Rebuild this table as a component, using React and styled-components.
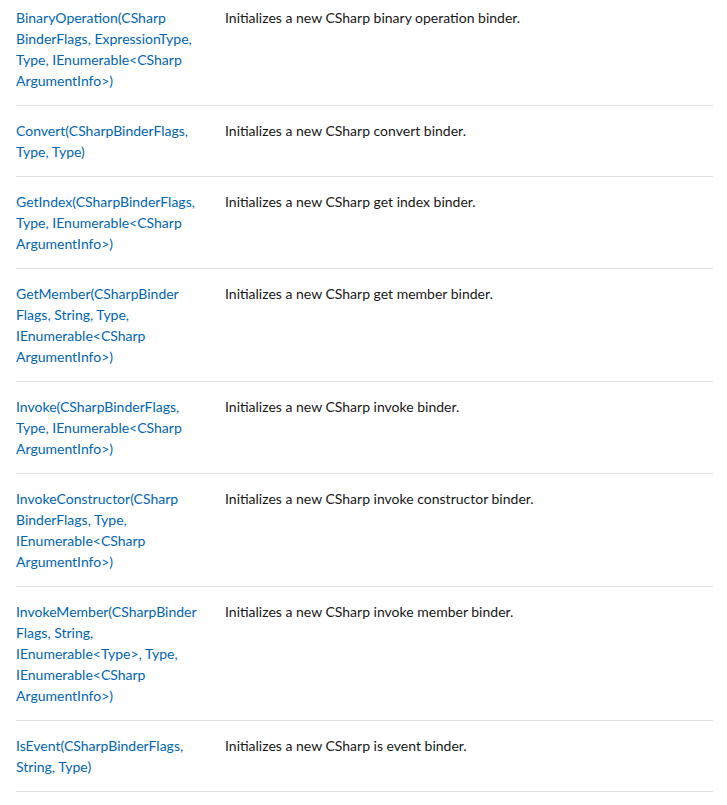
import React from 'react';
import styled, { createGlobalStyle } from 'styled-components';

const GlobalStyle = createGlobalStyle`
  body {
    margin: 0;
    background: #ffffff;
    font-family: 'Segoe UI', Lato, 'Liberation Sans', sans-serif;
    font-size: 14px;
    color: #171717;
  }
`;

const MembersTable = styled.div`
  margin: -7px 14px 0 16px;
`;

const Row = styled.div`
  display: grid;
  grid-template-columns: 209px 1fr;
  border-bottom: 1px solid #e1e1e1;
`;

const Cell = styled.div`
  padding: 14px 0;
  line-height: 21px;
`;

const MemberLink = styled.a`
  color: #0065b3;
  text-decoration: none;
  cursor: pointer;
`;

const members = [
  {
    lines: ['BinaryOperation(CSharp', 'BinderFlags, ExpressionType,', 'Type, IEnumerable<CSharp', 'ArgumentInfo>)'],
    summary: 'Initializes a new CSharp binary operation binder.',
  },
  {
    lines: ['Convert(CSharpBinderFlags,', 'Type, Type)'],
    summary: 'Initializes a new CSharp convert binder.',
  },
  {
    lines: ['GetIndex(CSharpBinderFlags,', 'Type, IEnumerable<CSharp', 'ArgumentInfo>)'],
    summary: 'Initializes a new CSharp get index binder.',
  },
  {
    lines: ['GetMember(CSharpBinder', 'Flags, String, Type,', 'IEnumerable<CSharp', 'ArgumentInfo>)'],
    summary: 'Initializes a new CSharp get member binder.',
  },
  {
    lines: ['Invoke(CSharpBinderFlags,', 'Type, IEnumerable<CSharp', 'ArgumentInfo>)'],
    summary: 'Initializes a new CSharp invoke binder.',
  },
  {
    lines: ['InvokeConstructor(CSharp', 'BinderFlags, Type,', 'IEnumerable<CSharp', 'ArgumentInfo>)'],
    summary: 'Initializes a new CSharp invoke constructor binder.',
  },
  {
    lines: ['InvokeMember(CSharpBinder', 'Flags, String,', 'IEnumerable<Type>, Type,', 'IEnumerable<CSharp', 'ArgumentInfo>)'],
    summary: 'Initializes a new CSharp invoke member binder.',
  },
  {
    lines: ['IsEvent(CSharpBinderFlags,', 'String, Type)'],
    summary: 'Initializes a new CSharp is event binder.',
  },
];

const App = () => {
  return (
    <>
      <GlobalStyle />
      <MembersTable>
        {members.map((m) => (
          <Row key={m.lines[0]}>
            <Cell>
              <MemberLink>
                {m.lines.map((line, i) => (
                  <React.Fragment key={i}>
                    {line}
                    {i < m.lines.length - 1 && <br />}
                  </React.Fragment>
                ))}
              </MemberLink>
            </Cell>
            <Cell>{m.summary}</Cell>
          </Row>
        ))}
      </MembersTable>
    </>
  );
};

export default App;
